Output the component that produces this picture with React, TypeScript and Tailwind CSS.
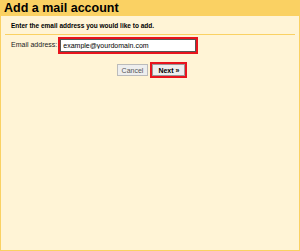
export default function App() {
  return (
    <div className="w-[300px] h-[251px] bg-white font-['Liberation_Sans',Arial,sans-serif] text-black">
      <div className="h-full flex flex-col border border-[#fad163] bg-[#fff4d6]">
        <div className="h-[15px] bg-[#fad163] px-[3px] flex items-center">
          <h1 className="text-[12.5px] font-bold leading-none">Add a mail account</h1>
        </div>
        <div className="px-[4px]">
          <p className="text-[6.5px] font-bold pl-[6px] pt-[6px] pb-[4px] border-b border-[#fad163] leading-[8px]">
            Enter the email address you would like to add.
          </p>
          <div className="flex items-center pl-[6px] mt-[2px]">
            <label className="text-[7px] text-[#222]">Email address:</label>
            <div className="ml-[1px] flex border-2 border-[#e8141d]">
              <input
                className="w-[136px] h-[13px] border border-[#555] bg-white px-[2px] text-[7px] leading-none outline-none"
                defaultValue="example@yourdomain.com"
              />
            </div>
          </div>
          <div className="flex justify-center items-center gap-[2px] mt-[8px] pl-[4px]">
            <button className="flex items-center h-[12px] px-[4px] border border-[#bbb] bg-[#eee] text-[7px] text-[#555] leading-none">Cancel</button>
            <div className="flex border-2 border-[#e8141d]">
              <button className="flex items-center h-[12px] px-[5px] border border-[#999] bg-[#eee] text-[7px] font-bold leading-none">Next »</button>
            </div>
          </div>
        </div>
      </div>
    </div>
  );
}
